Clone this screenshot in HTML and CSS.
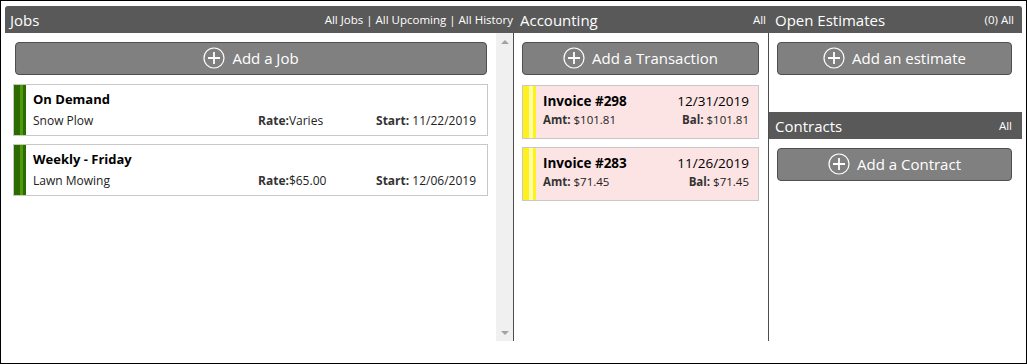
FILE: index.html
```html
<!DOCTYPE html>
<html>
<head>
<meta charset="utf-8">
<link rel="stylesheet" href="styles.css">
</head>
<body>
<div class="frame">
  <div class="col col-jobs">
    <div class="hdr hdr-jobs"><span class="hdr-title">Jobs</span><span class="hdr-links">All Jobs | All Upcoming | All History</span></div>
    <div class="body body-jobs">
      <div class="pane">
        <div class="btn btn-job">
          <svg class="plus" viewBox="0 0 22 22" width="22" height="22"><circle cx="11" cy="11" r="10" fill="none" stroke="#fff" stroke-width="1.2"/><path d="M11 5v12M5 11h12" stroke="#fff" stroke-width="1.8"/></svg>
          <span>Add a Job</span>
        </div>
        <div class="job">
          <div class="stripe green"></div>
          <div class="job-main">
            <div class="job-title">On Demand</div>
            <div class="job-row">
              <span class="job-name">Snow Plow</span>
              <span class="job-rate"><b>Rate:</b>Varies</span>
              <span class="job-start"><b>Start:</b> 11/22/2019</span>
            </div>
          </div>
        </div>
        <div class="job">
          <div class="stripe green"></div>
          <div class="job-main">
            <div class="job-title">Weekly - Friday</div>
            <div class="job-row">
              <span class="job-name">Lawn Mowing</span>
              <span class="job-rate"><b>Rate:</b>$65.00</span>
              <span class="job-start"><b>Start:</b> 12/06/2019</span>
            </div>
          </div>
        </div>
      </div>
      <div class="scrollbar"><span class="arrow up"></span><span class="arrow down"></span></div>
    </div>
  </div>

  <div class="col col-acct">
    <div class="hdr hdr-acct"><span class="hdr-title">Accounting</span><span class="hdr-links">All</span></div>
    <div class="body body-acct">
      <div class="btn btn-acct">
        <svg class="plus" viewBox="0 0 22 22" width="22" height="22"><circle cx="11" cy="11" r="10" fill="none" stroke="#fff" stroke-width="1.2"/><path d="M11 5v12M5 11h12" stroke="#fff" stroke-width="1.8"/></svg>
        <span>Add a Transaction</span>
      </div>
      <div class="inv">
        <div class="stripe yellow"></div>
        <div class="inv-main">
          <div class="inv-row1"><b>Invoice #298</b><span>12/31/2019</span></div>
          <div class="inv-row2"><span><b>Amt:</b> $101.81</span><span><b>Bal:</b> $101.81</span></div>
        </div>
      </div>
      <div class="inv">
        <div class="stripe yellow"></div>
        <div class="inv-main">
          <div class="inv-row1"><b>Invoice #283</b><span>11/26/2019</span></div>
          <div class="inv-row2"><span><b>Amt:</b> $71.45</span><span><b>Bal:</b> $71.45</span></div>
        </div>
      </div>
    </div>
  </div>

  <div class="col col-est">
    <div class="hdr hdr-est"><span class="hdr-title">Open Estimates</span><span class="hdr-links">(0) All</span></div>
    <div class="body body-est">
      <div class="btn btn-est">
        <svg class="plus" viewBox="0 0 22 22" width="22" height="22"><circle cx="11" cy="11" r="10" fill="none" stroke="#fff" stroke-width="1.2"/><path d="M11 5v12M5 11h12" stroke="#fff" stroke-width="1.8"/></svg>
        <span>Add an estimate</span>
      </div>
      <div class="hdr hdr-contracts"><span class="hdr-title">Contracts</span><span class="hdr-links">All</span></div>
      <div class="btn btn-est btn-contract">
        <svg class="plus" viewBox="0 0 22 22" width="22" height="22"><circle cx="11" cy="11" r="10" fill="none" stroke="#fff" stroke-width="1.2"/><path d="M11 5v12M5 11h12" stroke="#fff" stroke-width="1.8"/></svg>
        <span>Add a Contract</span>
      </div>
    </div>
  </div>
</div>
</body>
</html>
```

FILE: styles.css
```css
* { box-sizing: border-box; }
html, body { margin: 0; padding: 0; background: #fff; }
body { font-family: "Open Sans", "Noto Sans", sans-serif; color: #000; }

.frame {
  width: 1027px;
  height: 364px;
  border: 1px solid #000;
  padding: 5px 4px 0 4px;
  display: flex;
  align-items: flex-start;
}

.col { display: flex; flex-direction: column; }
.col-jobs { width: 509px; }
.col-acct { width: 255px; }
.col-est { width: 253px; }

.hdr {
  height: 27px;
  background: #595959;
  color: #fff;
  display: flex;
  align-items: center;
  justify-content: space-between;
  white-space: nowrap;
}
.hdr-title { font-size: 15px; }
.hdr-links { font-size: 11.5px; }
.hdr-jobs { padding: 0 1px 0 5px; border-top-left-radius: 3px; }
.hdr-acct { padding: 0 3px 0 6px; }
.hdr-est { padding: 0 8px 0 6px; border-top-right-radius: 3px; }
.hdr-contracts { padding: 0 10px 0 6px; margin-top: 37px; }

.body { height: 308px; }
.body-jobs { display: flex; border-right: 1px solid #4d4d4d; }
.body-acct { border-right: 1px solid #4d4d4d; padding: 0 9px 0 8px; }
.body-est { padding: 0; }

.pane { flex: 1; }

.scrollbar {
  width: 17px;
  background: #f0f0f0;
  display: flex;
  flex-direction: column;
  justify-content: space-between;
  align-items: center;
  padding: 7px 0 6px 0;
}
.arrow { width: 0; height: 0; border-left: 4px solid transparent; border-right: 4px solid transparent; }
.arrow.up { border-bottom: 4px solid #a3a3a3; }
.arrow.down { border-top: 4px solid #a3a3a3; }

.btn {
  height: 33px;
  margin-top: 9px;
  background: #808080;
  border: 1px solid #4f4f4f;
  border-radius: 4px;
  color: #fff;
  display: flex;
  align-items: center;
  justify-content: center;
  gap: 7px;
  font-size: 15px;
  padding-bottom: 2px;
}
.btn .plus { display: block; margin-top: 1px; }
.btn-job { margin-left: 10px; margin-right: 9px; }
.btn-est { margin-left: 8px; margin-right: 10px; }

.job {
  margin: 9px 8px 0 8px;
  height: 52px;
  border: 1px solid #c8c8c8;
  display: flex;
}
.job + .job { margin-top: 8px; }
.stripe { width: 12px; flex: none; }
.green {
  background: linear-gradient(to right, #2d6a00 0, #2d6a00 6px, #4d9b08 6px, #4d9b08 9px, #2d6a00 9px, #2d6a00 12px);
}
.yellow {
  width: 13px;
  background: linear-gradient(to right, #fff01e 0, #fff01e 6px, #ffffa6 6px, #ffffa6 10px, #fff01e 10px, #fff01e 13px);
}
.job-main { flex: 1; padding: 4px 11px 0 7px; }
.job-title { font-size: 13px; font-weight: 700; height: 20px; line-height: 20px; }
.job-row {
  display: grid;
  grid-template-columns: 1fr 114px 104px;
  font-size: 12px;
  color: #222;
  margin-top: 3px;
  line-height: 17px;
  white-space: nowrap;
}
.job-start { text-align: right; }
.job-row b { font-weight: 700; color: #333; }

.inv {
  margin-top: 10px;
  height: 54px;
  border: 1px solid #c8c8c8;
  background: #fce4e4;
  display: flex;
}
.inv + .inv { margin-top: 8px; }
.inv-main { flex: 1; padding: 5px 9px 0 7px; }
.inv-row1 { display: flex; justify-content: space-between; font-size: 13.5px; line-height: 20px; }
.inv-row1 b { font-weight: 700; }
.inv-row2 { display: flex; justify-content: space-between; font-size: 11.5px; line-height: 17px; color: #222; }
.inv-row2 b { font-weight: 700; color: #333; }
```
